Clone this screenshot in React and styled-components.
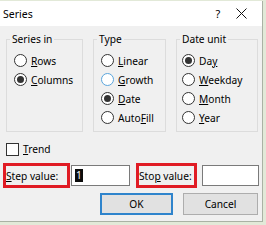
import React from "react";
import styled, { createGlobalStyle } from "styled-components";

const Global = createGlobalStyle`
  html, body { margin: 0; padding: 0; }
  body { background: #e2e9d8; font-family: "Noto Sans", "DejaVu Sans", sans-serif; }
`;

const Screen = styled.div`
  width: 266px;
  height: 225px;
  overflow: hidden;
  box-sizing: border-box;
  padding-top: 1px;
  background: #e2e9d8;
`;

const Dialog = styled.div`
  width: 262px;
  height: 220px;
  background: #f0f0f0;
  border-right: 1px solid #aab2a4;
  border-bottom: 1px solid #aab2a4;
  display: flex;
  flex-direction: column;
  font-size: 10.2px;
  color: #000;
`;

const TitleBar = styled.div`
  height: 25px;
  background: #fff;
  display: flex;
  align-items: center;
  padding-left: 3px;
  padding-right: 8px;
`;

const Title = styled.div`
  flex: 1;
  font-size: 10.5px;
`;

const TitleButton = styled.div`
  width: ${(p) => p.$w}px;
  height: 25px;
  display: flex;
  align-items: center;
  justify-content: center;
  font-size: 11px;
`;

const Body = styled.div`
  display: flex;
  flex-direction: column;
  padding-top: 6px;
`;

const GroupsRow = styled.div`
  display: flex;
  gap: 10px;
  padding-left: 6px;
`;

const Group = styled.fieldset`
  width: ${(p) => p.$w}px;
  height: 100px;
  box-sizing: border-box;
  margin: 0;
  padding: 0;
  min-width: 0;
  border: 1px solid #dcdcdc;
`;

const Legend = styled.legend`
  margin-left: 3px;
  padding: 0 2px;
  line-height: 14px;
`;

const RadioList = styled.div`
  display: flex;
  flex-direction: column;
  padding-top: 5px;
  padding-left: ${(p) => p.$inset}px;
`;

const Row = styled.div`
  height: 19px;
  display: flex;
  align-items: center;
  gap: 4px;
  white-space: nowrap;
`;

const Circle = styled.span`
  width: 13px;
  height: 13px;
  box-sizing: border-box;
  border-radius: 50%;
  border: 1px solid ${(p) => (p.$focus ? "#5aa5dc" : "#333")};
  background: #fff;
  display: flex;
  align-items: center;
  justify-content: center;
  flex: none;
  &::after {
    content: "";
    width: 7px;
    height: 7px;
    border-radius: 50%;
    background: ${(p) => (p.$checked ? "#333" : "transparent")};
  }
`;

const TrendRow = styled.div`
  margin-top: 10px;
  padding-left: 6px;
  height: 14px;
  display: flex;
  align-items: center;
  gap: 4px;
`;

const Box = styled.span`
  width: 13px;
  height: 13px;
  box-sizing: border-box;
  border: 1px solid #333;
  background: #fff;
`;

const ValueRow = styled.div`
  margin-top: 7px;
  padding-left: 3px;
  display: flex;
  align-items: center;
`;

const RedBox = styled.div`
  width: ${(p) => p.$w}px;
  height: 25px;
  box-sizing: border-box;
  border: 3px solid #e01b24;
  display: flex;
  align-items: center;
  margin-left: ${(p) => p.$ml || 0}px;
  white-space: nowrap;
`;

const Input = styled.div`
  width: ${(p) => p.$w}px;
  height: 21px;
  box-sizing: border-box;
  border: 1px solid #7a7a7a;
  background: #fff;
  margin-left: ${(p) => p.$ml}px;
  display: flex;
  align-items: center;
  padding-left: 3px;
`;

const Selected = styled.span`
  background: #0c0c0c;
  color: #fff;
  line-height: 13px;
  padding: 0 1px;
`;

const ButtonRow = styled.div`
  margin-top: 5px;
  display: flex;
  justify-content: flex-end;
  gap: 10px;
  padding-right: 4px;
`;

const Button = styled.div`
  width: ${(p) => p.$w}px;
  height: 22px;
  box-sizing: border-box;
  background: #e1e1e1;
  border: ${(p) => (p.$default ? "2px solid #2f84cc" : "1px solid #adadad")};
  display: flex;
  align-items: center;
  justify-content: center;
`;

const Radio = ({ checked, focus, children }) => (
  <Row>
    <Circle $checked={checked} $focus={focus} />
    <span>{children}</span>
  </Row>
);

export default function App() {
  return (
    <Screen>
      <Global />
      <Dialog>
        <TitleBar>
          <Title>Series</Title>
          <TitleButton $w={20}>?</TitleButton>
          <TitleButton $w={26}>
            <svg width="11" height="11" viewBox="0 0 11 11">
              <path d="M0.5 0.5 L10.5 10.5 M10.5 0.5 L0.5 10.5" stroke="#111" strokeWidth="1" />
            </svg>
          </TitleButton>
        </TitleBar>
        <Body>
          <GroupsRow>
            <Group $w={77}>
              <Legend>Series in</Legend>
              <RadioList $inset={7}>
                <Radio><u>R</u>ows</Radio>
                <Radio checked><u>C</u>olumns</Radio>
              </RadioList>
            </Group>
            <Group $w={73}>
              <Legend>Type</Legend>
              <RadioList $inset={7}>
                <Radio><u>L</u>inear</Radio>
                <Radio focus><u>G</u>rowth</Radio>
                <Radio checked><u>D</u>ate</Radio>
                <Radio>Auto<u>F</u>ill</Radio>
              </RadioList>
            </Group>
            <Group $w={82}>
              <Legend>Date unit</Legend>
              <RadioList $inset={5}>
                <Radio checked>Da<u>y</u></Radio>
                <Radio><u>W</u>eekday</Radio>
                <Radio><u>M</u>onth</Radio>
                <Radio><u>Y</u>ear</Radio>
              </RadioList>
            </Group>
          </GroupsRow>
          <TrendRow>
            <Box />
            <span><u>T</u>rend</span>
          </TrendRow>
          <ValueRow>
            <RedBox $w={67}><span><u>S</u>tep value:</span></RedBox>
            <Input $w={59} $ml={1}><Selected>1</Selected></Input>
            <RedBox $w={61} $ml={6}><span>Sto<u>p</u> value:</span></RedBox>
            <Input $w={57} $ml={5} />
          </ValueRow>
          <ButtonRow>
            <Button $w={73} $default>OK</Button>
            <Button $w={75}>Cancel</Button>
          </ButtonRow>
        </Body>
      </Dialog>
    </Screen>
  );
}
